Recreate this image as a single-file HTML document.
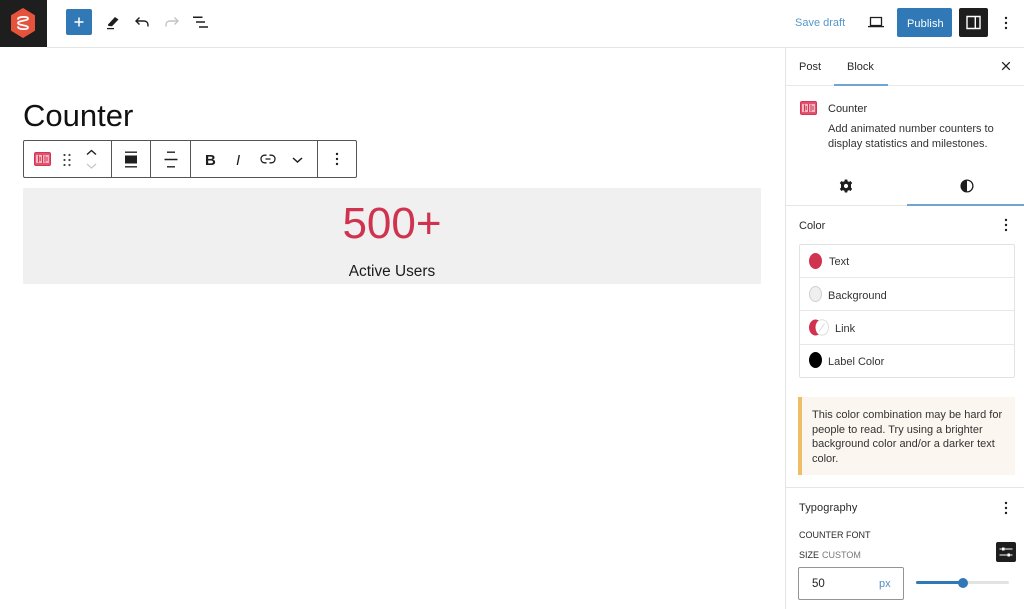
<!DOCTYPE html>
<html lang="en">
<head>
<meta charset="utf-8">
<title>Counter</title>
<style>
html,body{margin:0;padding:0;background:#fff}
#p{position:relative;width:1024px;height:609px;overflow:hidden;background:#fff;font-family:"Liberation Sans",sans-serif;color:#1e1e1e;font-size:11px;filter:blur(.3px)}
#p div,#p span.t,#p svg{position:absolute}
.t{white-space:nowrap;line-height:14px}
.bl{background:#dfdfdf}
</style>
</head>
<body>
<div id="p">
<!-- top bar -->
<div style="left:0;top:0;width:47px;height:47px;background:#1e1e1e"></div>
<div class="bl" style="left:47px;top:47px;width:977px;height:1px;background:#e4e4e4"></div>
<svg style="left:8px;top:7px" width="30" height="32" viewBox="0 0 30 32">
<path d="M15 1.5L26.5 8.5V23.5L15 30.5L3.5 23.5V8.5Z" fill="#e5533d" stroke="#e5533d" stroke-linejoin="round" stroke-width="1"/>
<path d="M10 12C10 9.5 20 9 20 11.5C20 14 10 13.5 10 16C10 18.5 20 18 20 20.5C20 23 10 22.5 10 20" fill="none" stroke="#fff" stroke-width="1.8" stroke-linecap="round"/>
</svg>
<div style="left:66px;top:9px;width:26px;height:26px;background:#3178b6;border-radius:2px"></div>
<svg style="left:72px;top:15px" width="14" height="14" viewBox="0 0 14 14"><path d="M7 2.5V11.5M2.5 7H11.5" stroke="#fff" stroke-width="1.5"/></svg>
<svg style="left:105px;top:14px" width="16" height="16" viewBox="0 0 16 16"><path d="M3 10.5L10 3L13.5 5.5L7 12.2L3.3 12Z" fill="#1e1e1e"/><path d="M2 14.6H9" stroke="#1e1e1e" stroke-width="1.3"/></svg>
<svg style="left:134px;top:14px" width="16" height="16" viewBox="0 0 16 16"><path d="M5.5 3.5L2 7L5.5 10.5M2 7H10C12.5 7 14 8.5 14 11V12.5" fill="none" stroke="#1e1e1e" stroke-width="1.4"/></svg>
<svg style="left:164px;top:14px" width="16" height="16" viewBox="0 0 16 16"><path d="M10.5 3.5L14 7L10.5 10.5M14 7H6C3.5 7 2 8.5 2 11V12.5" fill="none" stroke="#c4c4c4" stroke-width="1.4"/></svg>
<svg style="left:192px;top:15px" width="17" height="14" viewBox="0 0 17 14"><path d="M1 2.2H10.5M4 7H13M7 12H16" stroke="#1e1e1e" stroke-width="1.5"/></svg>
<span class="t" style="left:795px;top:16px;font-size:11px;color:#5597cc">Save draft</span>
<svg style="left:867px;top:15px" width="18" height="14" viewBox="0 0 18 14"><path d="M3.5 2.5H14.5V10.5H3.5Z" fill="none" stroke="#1e1e1e" stroke-width="1.3"/><path d="M1 11.6H17" stroke="#1e1e1e" stroke-width="1.3"/></svg>
<div style="left:897px;top:8px;width:55px;height:29px;background:#3178b6;border-radius:2px"></div>
<span class="t" style="left:907px;top:17px;font-size:11px;color:#fff;letter-spacing:.1px">Publish</span>
<div style="left:959px;top:8px;width:29px;height:29px;background:#1e1e1e;border-radius:2px"></div>
<svg style="left:966px;top:15px" width="15" height="15" viewBox="0 0 15 15"><path d="M1 1.5H14V13.5H1Z M9.3 1.5V13.5" fill="none" stroke="#fff" stroke-width="1.4"/></svg>
<svg style="left:1003px;top:15px" width="6" height="16" viewBox="0 0 6 16"><circle cx="3" cy="3" r="1.2" fill="#1e1e1e"/><circle cx="3" cy="8" r="1.2" fill="#1e1e1e"/><circle cx="3" cy="13" r="1.2" fill="#1e1e1e"/></svg>

<!-- editor -->
<span class="t" style="left:23px;top:98px;font-size:31px;line-height:36px;color:#111">Counter</span>
<div style="left:23px;top:140px;width:332px;height:36px;border:1px solid #555;border-radius:2px;background:#fff"></div>
<div style="left:111px;top:140px;width:1px;height:38px;background:#555"></div>
<div style="left:150px;top:140px;width:1px;height:38px;background:#555"></div>
<div style="left:190px;top:140px;width:1px;height:38px;background:#555"></div>
<div style="left:317px;top:140px;width:1px;height:38px;background:#555"></div>
<svg style="left:34px;top:152px" width="17" height="14" viewBox="0 0 17 14"><rect x="0.5" y="0.5" width="16" height="13" rx="1.5" fill="#e0526f" stroke="#d6344f"/><rect x="2" y="3" width="13" height="8" fill="#f3b6c2"/><path d="M4.5 3.5V10.5M8.5 3V11M11 3.5V10.5M6.2 5V9M13 5V9" stroke="#d6344f" stroke-width="1"/></svg>
<svg style="left:62px;top:153px" width="10" height="14" viewBox="0 0 10 14"><g fill="#444"><circle cx="2.5" cy="2" r="1.1"/><circle cx="7.5" cy="2" r="1.1"/><circle cx="2.5" cy="7" r="1.1"/><circle cx="7.5" cy="7" r="1.1"/><circle cx="2.5" cy="12" r="1.1"/><circle cx="7.5" cy="12" r="1.1"/></g></svg>
<svg style="left:85px;top:149px" width="13" height="21" viewBox="0 0 13 21"><path d="M2 5.5L6.5 1.5L11 5.5" fill="none" stroke="#1e1e1e" stroke-width="1.4"/><path d="M2 15L6.5 19L11 15" fill="none" stroke="#c9c9c9" stroke-width="1.4"/></svg>
<svg style="left:124px;top:151px" width="14" height="17" viewBox="0 0 14 17"><path d="M1 1.2H13M1 15.8H13" stroke="#1e1e1e" stroke-width="1.4"/><rect x="1" y="4.5" width="12" height="8" fill="#1e1e1e"/></svg>
<svg style="left:164px;top:151px" width="14" height="17" viewBox="0 0 14 17"><path d="M3 1.2H11M0.5 8.5H13.5M3 15.8H11" stroke="#1e1e1e" stroke-width="1.4"/></svg>
<span class="t" style="left:205px;top:152px;font-size:15px;line-height:18px;font-weight:700;color:#1e1e1e">B</span>
<span class="t" style="left:236px;top:152px;font-size:15px;line-height:18px;font-style:italic;color:#1e1e1e">I</span>
<svg style="left:260px;top:153px" width="16" height="12" viewBox="0 0 16 12"><path d="M6.5 2.2H4.5C2.5 2.2 1 3.8 1 6C1 8.2 2.5 9.8 4.5 9.8H6.5M9.5 2.2H11.5C13.5 2.2 15 3.8 15 6C15 8.2 13.5 9.8 11.5 9.8H9.5M5.5 6H10.5" fill="none" stroke="#1e1e1e" stroke-width="1.3"/></svg>
<svg style="left:292px;top:156px" width="11" height="8" viewBox="0 0 11 8"><path d="M1 2L5.5 6L10 2" fill="none" stroke="#1e1e1e" stroke-width="1.5"/></svg>
<svg style="left:334px;top:151px" width="6" height="16" viewBox="0 0 6 16"><circle cx="3" cy="3" r="1.2" fill="#1e1e1e"/><circle cx="3" cy="8" r="1.2" fill="#1e1e1e"/><circle cx="3" cy="13" r="1.2" fill="#1e1e1e"/></svg>

<div style="left:23px;top:188px;width:738px;height:96px;background:#f0f0f0"></div>
<span class="t" style="left:23px;width:738px;text-align:center;top:197px;font-size:44px;line-height:54px;color:#d0334f">500+</span>
<span class="t" style="left:23px;width:738px;text-align:center;top:263px;font-size:15.4px;line-height:18px;color:#1a1a1a">Active Users</span>

<!-- sidebar -->
<div style="left:785px;top:48px;width:1px;height:561px;background:#e4e4e4"></div>
<div style="left:786px;top:85px;width:238px;height:1px;background:#e8e8e8"></div>
<span class="t" style="left:799px;top:60px;font-size:11px;color:#2a2a2a">Post</span>
<span class="t" style="left:847px;top:60px;font-size:11px;color:#2a2a2a">Block</span>
<div style="left:834px;top:84px;width:54px;height:2px;background:#6fa5d2"></div>
<svg style="left:1001px;top:61px" width="10" height="10" viewBox="0 0 10 10"><path d="M1.2 1.2L8.8 8.8M8.8 1.2L1.2 8.8" stroke="#1e1e1e" stroke-width="1.3"/></svg>

<svg style="left:800px;top:101px" width="17" height="14" viewBox="0 0 17 14"><rect x="0.5" y="0.5" width="16" height="13" rx="1.5" fill="#e0526f" stroke="#d6344f"/><rect x="2" y="3" width="13" height="8" fill="#f3b6c2"/><path d="M4.5 3.5V10.5M8.5 3V11M11 3.5V10.5M6.2 5V9M13 5V9" stroke="#d6344f" stroke-width="1"/></svg>
<span class="t" style="left:828px;top:102px;font-size:11px;color:#2a2a2a">Counter</span>
<span class="t" style="left:828px;top:122px;font-size:11px;line-height:14.5px;color:#333">Add animated number counters to<br>display statistics and milestones.</span>

<svg style="left:839px;top:179px" width="14" height="14" viewBox="0 0 14 14"><path d="M5.8 0.5H8.2L8.6 2.3L10 2.9L11.6 2L13.2 4.1L12 5.4V8.6L13.2 9.9L11.6 12L10 11.1L8.6 11.7L8.2 13.5H5.8L5.4 11.7L4 11.1L2.4 12L0.8 9.9L2 8.6V5.4L0.8 4.1L2.4 2L4 2.9L5.4 2.3Z" fill="#1e1e1e"/><circle cx="7" cy="7" r="2.1" fill="#fff"/></svg>
<svg style="left:960px;top:179px" width="14" height="14" viewBox="0 0 14 14"><circle cx="7" cy="7" r="5.9" fill="#fff" stroke="#1e1e1e" stroke-width="1.3"/><path d="M7 1A6 6 0 0 0 7 13Z" fill="#1e1e1e"/></svg>
<div style="left:786px;top:205px;width:238px;height:1px;background:#e6e6e6"></div>
<div style="left:907px;top:204px;width:117px;height:2px;background:#6fa5d2"></div>

<span class="t" style="left:799px;top:219px;font-size:11px;color:#2a2a2a">Color</span>
<svg style="left:1003px;top:217px" width="6" height="16" viewBox="0 0 6 16"><circle cx="3" cy="3" r="1.2" fill="#1e1e1e"/><circle cx="3" cy="8" r="1.2" fill="#1e1e1e"/><circle cx="3" cy="13" r="1.2" fill="#1e1e1e"/></svg>

<div style="left:799px;top:244px;width:214px;height:132px;border:1px solid #e2e2e2;border-radius:2px"></div>
<div style="left:800px;top:277px;width:214px;height:1px;background:#e8e8e8"></div>
<div style="left:800px;top:310px;width:214px;height:1px;background:#e8e8e8"></div>
<div style="left:800px;top:344px;width:214px;height:1px;background:#e8e8e8"></div>

<div style="left:809px;top:253px;width:13px;height:16px;border-radius:50%;background:#d0334f"></div>
<span class="t" style="left:829px;top:255px;font-size:11px;color:#333">Text</span>
<div style="left:809px;top:286px;width:11px;height:14px;border:1px solid #cfcfcf;border-radius:50%;background:#efefef"></div>
<span class="t" style="left:828px;top:289px;font-size:11px;color:#333">Background</span>
<svg style="left:809px;top:319px" width="20" height="17" viewBox="0 0 20 17"><ellipse cx="13" cy="8.5" rx="6.5" ry="7.7" fill="#fff" stroke="#ddd"/><ellipse cx="6.5" cy="8.5" rx="6.5" ry="8" fill="#d0334f"/><ellipse cx="11" cy="8.5" rx="4.5" ry="7" fill="#fff"/><path d="M10 12.5L15.5 4.5" stroke="#ddd"/></svg>
<span class="t" style="left:835px;top:322px;font-size:11px;color:#333">Link</span>
<div style="left:809px;top:352px;width:13px;height:16px;border-radius:50%;background:#000"></div>
<span class="t" style="left:828px;top:355px;font-size:11px;color:#333">Label Color</span>

<div style="left:799px;top:397px;width:216px;height:78px;background:#fbf6ef"></div>
<div style="left:798px;top:397px;width:4px;height:78px;background:#efbd67"></div>
<span class="t" style="left:812px;top:408px;font-size:11px;line-height:14.7px;color:#333">This color combination may be hard for<br>people to read. Try using a brighter<br>background color and/or a darker text<br>color.</span>

<div style="left:786px;top:487px;width:238px;height:1px;background:#e6e6e6"></div>
<span class="t" style="left:799px;top:501px;font-size:11px;letter-spacing:.1px;color:#2a2a2a">Typography</span>
<svg style="left:1003px;top:500px" width="6" height="16" viewBox="0 0 6 16"><circle cx="3" cy="3" r="1.2" fill="#1e1e1e"/><circle cx="3" cy="8" r="1.2" fill="#1e1e1e"/><circle cx="3" cy="13" r="1.2" fill="#1e1e1e"/></svg>
<span class="t" style="left:799px;top:528px;font-size:9px;color:#2a2a2a">COUNTER FONT</span>
<span class="t" style="left:799px;top:548px;font-size:9px;color:#2a2a2a">SIZE</span>
<span class="t" style="left:822px;top:548px;font-size:9px;color:#777">CUSTOM</span>
<div style="left:996px;top:542px;width:20px;height:20px;background:#1e1e1e;border-radius:2px"></div>
<svg style="left:998px;top:544px" width="16" height="16" viewBox="0 0 16 16"><path d="M1.5 5H14.5M1.5 11H14.5" stroke="#fff" stroke-width="1.1"/><rect x="4" y="3.5" width="2.5" height="3" fill="#fff"/><rect x="9.5" y="9.5" width="2.5" height="3" fill="#fff"/></svg>
<div style="left:798px;top:567px;width:104px;height:31px;border:1px solid #949494;border-radius:2px"></div>
<span class="t" style="left:812px;top:577px;font-size:11.5px;color:#222">50</span>
<span class="t" style="left:879px;top:577px;font-size:11px;color:#4f8fc4">px</span>
<div style="left:916px;top:581px;width:93px;height:3px;background:#e2e2e2;border-radius:2px"></div>
<div style="left:916px;top:581px;width:47px;height:3px;background:#3178b6;border-radius:2px"></div>
<div style="left:958px;top:578px;width:10px;height:10px;background:#3178b6;border-radius:50%"></div>
</div>
</body>
</html>
